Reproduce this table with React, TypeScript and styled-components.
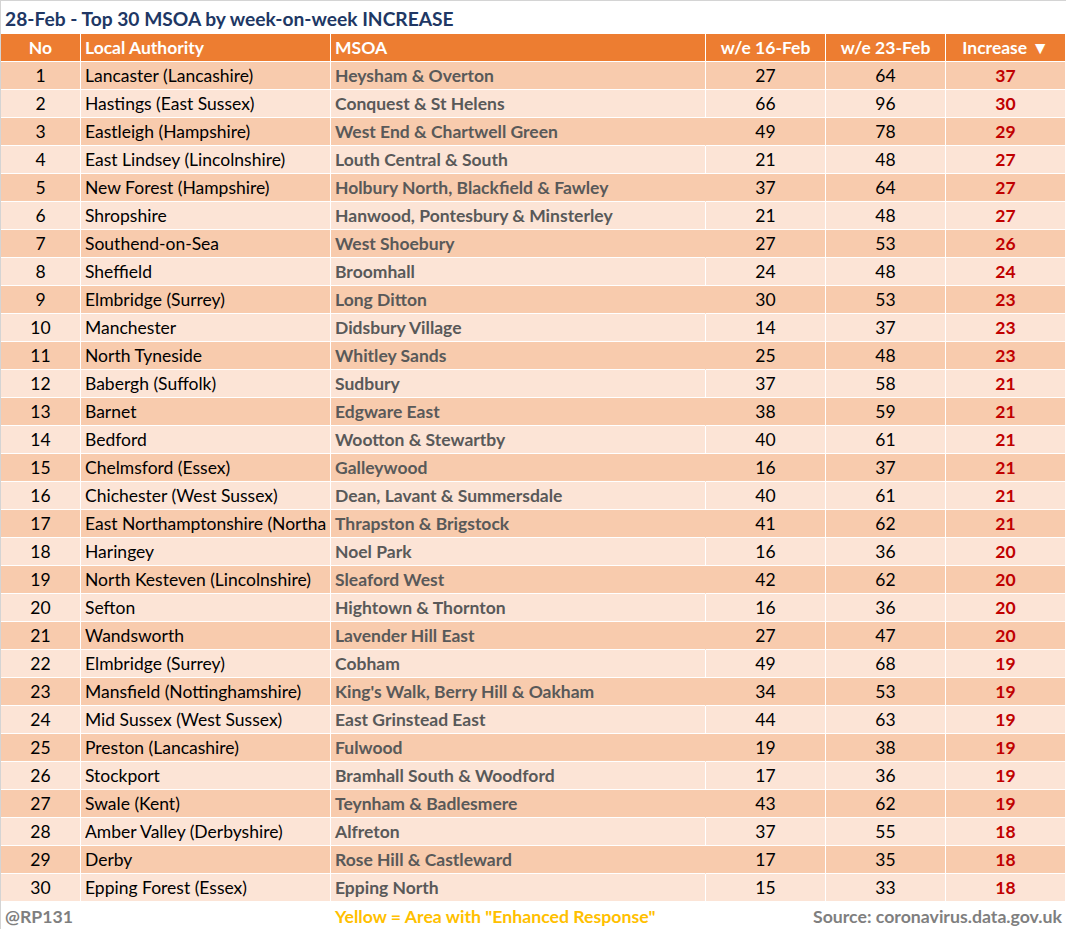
import React from "react";
import styled, { createGlobalStyle } from "styled-components";

const GlobalStyle = createGlobalStyle`
  html, body { margin: 0; padding: 0; background: #ffffff; }
  body { font-family: "Lato", "Liberation Sans", sans-serif; }
  * { box-sizing: border-box; }
`;

type Row = [number, string, string, number, number, number];

const rows: Row[] = [
  [1, "Lancaster (Lancashire)", "Heysham & Overton", 27, 64, 37],
  [2, "Hastings (East Sussex)", "Conquest & St Helens", 66, 96, 30],
  [3, "Eastleigh (Hampshire)", "West End & Chartwell Green", 49, 78, 29],
  [4, "East Lindsey (Lincolnshire)", "Louth Central & South", 21, 48, 27],
  [5, "New Forest (Hampshire)", "Holbury North, Blackfield & Fawley", 37, 64, 27],
  [6, "Shropshire", "Hanwood, Pontesbury & Minsterley", 21, 48, 27],
  [7, "Southend-on-Sea", "West Shoebury", 27, 53, 26],
  [8, "Sheffield", "Broomhall", 24, 48, 24],
  [9, "Elmbridge (Surrey)", "Long Ditton", 30, 53, 23],
  [10, "Manchester", "Didsbury Village", 14, 37, 23],
  [11, "North Tyneside", "Whitley Sands", 25, 48, 23],
  [12, "Babergh (Suffolk)", "Sudbury", 37, 58, 21],
  [13, "Barnet", "Edgware East", 38, 59, 21],
  [14, "Bedford", "Wootton & Stewartby", 40, 61, 21],
  [15, "Chelmsford (Essex)", "Galleywood", 16, 37, 21],
  [16, "Chichester (West Sussex)", "Dean, Lavant & Summersdale", 40, 61, 21],
  [17, "East Northamptonshire (Northamptonshire)", "Thrapston & Brigstock", 41, 62, 21],
  [18, "Haringey", "Noel Park", 16, 36, 20],
  [19, "North Kesteven (Lincolnshire)", "Sleaford West", 42, 62, 20],
  [20, "Sefton", "Hightown & Thornton", 16, 36, 20],
  [21, "Wandsworth", "Lavender Hill East", 27, 47, 20],
  [22, "Elmbridge (Surrey)", "Cobham", 49, 68, 19],
  [23, "Mansfield (Nottinghamshire)", "King's Walk, Berry Hill & Oakham", 34, 53, 19],
  [24, "Mid Sussex (West Sussex)", "East Grinstead East", 44, 63, 19],
  [25, "Preston (Lancashire)", "Fulwood", 19, 38, 19],
  [26, "Stockport", "Bramhall South & Woodford", 17, 36, 19],
  [27, "Swale (Kent)", "Teynham & Badlesmere", 43, 62, 19],
  [28, "Amber Valley (Derbyshire)", "Alfreton", 37, 55, 18],
  [29, "Derby", "Rose Hill & Castleward", 17, 35, 18],
  [30, "Epping Forest (Essex)", "Epping North", 15, 33, 18],
];

const COLS = "80px 250px 375px 120px 120px 120px";

const Sheet = styled.div`
  width: 1066px;
  height: 929px;
  border-top: 1px solid #d4d4d4;
  border-left: 1px solid #d4d4d4;
  background: #ffffff;
  overflow: hidden;
`;

const Title = styled.h1`
  margin: 0;
  height: 33px;
  padding: 1px 0 0 4px;
  display: flex;
  align-items: center;
  font-family: "Lato", "Liberation Sans", sans-serif;
  font-size: 19.2px;
  font-weight: 700;
  color: #203764;
  white-space: nowrap;
`;

const GridRow = styled.div`
  display: grid;
  grid-template-columns: ${COLS};
  height: 28px;
`;

const HeaderRow = styled(GridRow)`
  background: #ed7d31;
  color: #ffffff;
  font-weight: 700;
`;

const BodyRow = styled(GridRow)<{ $dark: boolean }>`
  background: ${(p) => (p.$dark ? "#f8cbad" : "#fce4d6")};
`;

const Cell = styled.div<{
  $align?: "left" | "center" | "right";
  $divider?: boolean;
  $variant?: "plain" | "msoa" | "inc" | "head";
}>`
  display: flex;
  align-items: center;
  justify-content: ${(p) =>
    p.$align === "center" ? "center" : p.$align === "right" ? "flex-end" : "flex-start"};
  padding: 1px 4px 0;
  border-right: 1px solid ${(p) => (p.$divider === false ? "transparent" : "#ffffff")};
  border-bottom: 1px solid #ffffff;
  white-space: nowrap;
  overflow: hidden;
  font-family: "Lato", "Liberation Sans", sans-serif;
  font-size: 17.5px;
  line-height: 22px;
  font-weight: ${(p) => (p.$variant === "msoa" || p.$variant === "inc" || p.$variant === "head" ? 700 : 400)};
  color: ${(p) =>
    p.$variant === "msoa"
      ? "#595959"
      : p.$variant === "inc"
      ? "#c00000"
      : p.$variant === "head"
      ? "#ffffff"
      : "#000000"};
`;

const Clip = styled.span`
  display: block;
  overflow: hidden;
  text-overflow: clip;
  white-space: nowrap;
  width: 100%;
  line-height: 22px;
`;

const Footer = styled.div`
  display: grid;
  grid-template-columns: 330px 375px 1fr;
  height: 28px;
  align-items: center;
  font-family: "Lato", "Liberation Sans", sans-serif;
  font-size: 17.7px;
  font-weight: 700;
`;

const FootText = styled.div<{ $tone: "gray" | "yellow"; $align?: "left" | "right" }>`
  padding: 0 4px;
  color: ${(p) => (p.$tone === "yellow" ? "#ffc000" : "#7f7f7f")};
  text-align: ${(p) => p.$align ?? "left"};
  white-space: nowrap;
`;

export default function App() {
  return (
    <>
      <GlobalStyle />
      <Sheet>
        <Title>28-Feb - Top 30 MSOA by week-on-week INCREASE</Title>
        <HeaderRow>
          <Cell $align="center" $variant="head">No</Cell>
          <Cell $variant="head">Local Authority</Cell>
          <Cell $variant="head">MSOA</Cell>
          <Cell $align="center" $variant="head">w/e 16-Feb</Cell>
          <Cell $align="center" $variant="head">w/e 23-Feb</Cell>
          <Cell $align="center" $variant="head">Increase ▼</Cell>
        </HeaderRow>
        {rows.map(([no, la, msoa, a, b, inc]) => {
          const dark = no % 2 === 1;
          return (
            <BodyRow key={no} $dark={dark}>
              <Cell $align="center">{no}</Cell>
              <Cell>
                <Clip>{la}</Clip>
              </Cell>
              <Cell $variant="msoa" $divider={!dark || no === 1}>
                {msoa}
              </Cell>
              <Cell $align="center">{a}</Cell>
              <Cell $align="center">{b}</Cell>
              <Cell $align="center" $variant="inc">{inc}</Cell>
            </BodyRow>
          );
        })}
        <Footer>
          <FootText $tone="gray">@RP131</FootText>
          <FootText $tone="yellow">Yellow = Area with "Enhanced Response"</FootText>
          <FootText $tone="gray" $align="right">Source: coronavirus.data.gov.uk</FootText>
        </Footer>
      </Sheet>
    </>
  );
}
